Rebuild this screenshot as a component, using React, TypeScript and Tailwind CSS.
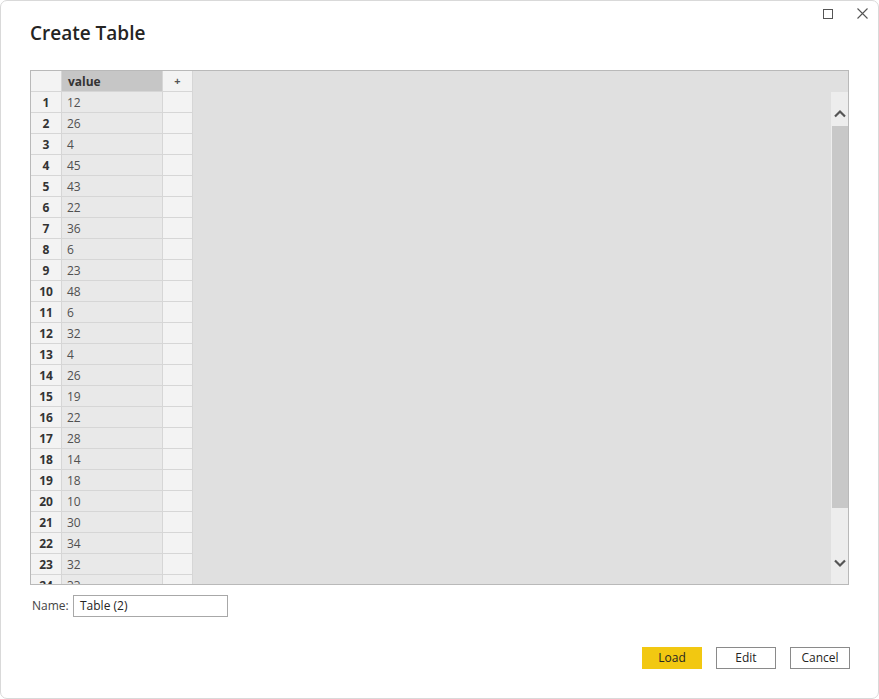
import React from "react";

const values = [12, 26, 4, 45, 43, 22, 36, 6, 23, 48, 6, 32, 4, 26, 19, 22, 28, 14, 18, 10, 30, 34, 32, 33];

const font = { fontFamily: '"Open Sans", "Noto Sans", Arial, sans-serif' };

function Chevron({ down }: { down?: boolean }) {
  return (
    <svg width="12" height="9" viewBox="0 0 12 9" className={down ? "rotate-180" : ""}>
      <path d="M1 7.5 L6 2.5 L11 7.5" fill="none" stroke="#555" strokeWidth="2.2" />
    </svg>
  );
}

export default function App() {
  return (
    <div
      className="relative w-[879px] h-[699px] bg-white border border-[#d9d9d9] rounded-[7px] overflow-hidden flex flex-col text-[#444]"
      style={font}
    >
      {/* window buttons */}
      <div className="absolute top-[7px] right-[10px] flex items-center gap-[24px]">
        <div className="w-[10px] h-[10px] border border-[#555]" />
        <svg width="11" height="11" viewBox="0 0 11 11">
          <path d="M0.5 0.5 L10.5 10.5 M10.5 0.5 L0.5 10.5" stroke="#555" strokeWidth="1.1" />
        </svg>
      </div>

      <div className="h-[69px] pl-[29px] pt-[19px]">
        <h1 className="text-[19px] font-semibold text-[#252423] leading-[26px]">Create Table</h1>
      </div>

      {/* grid */}
      <div className="mx-[29px] h-[515px] border border-[#b9b9b9] flex overflow-hidden">
        <div className="w-[162px] flex flex-col overflow-hidden text-[12px]">
          <div className="flex h-[21px] shrink-0 border-b border-[#d6d6d6]">
            <div className="w-[31px] border-r border-[#d6d6d6] bg-[#f3f3f3]" />
            <div className="w-[101px] border-r border-[#d6d6d6] bg-[#c6c6c6] pl-[6px] pt-[1px] flex items-center font-bold text-[#333]">
              value
            </div>
            <div className="w-[30px] border-r border-[#d6d6d6] bg-[#f3f3f3] pt-[1px] flex items-center justify-center font-bold text-[#555] text-[11px]">
              +
            </div>
          </div>
          {values.map((v, i) => (
            <div key={i} className="flex h-[21px] shrink-0 border-b border-[#d6d6d6]">
              <div className="w-[31px] border-r border-[#d6d6d6] bg-[#f3f3f3] flex items-center justify-center pt-[1px] font-bold text-[#333]">
                {i + 1}
              </div>
              <div className="w-[101px] border-r border-[#d6d6d6] bg-[#e9e9e9] pl-[5px] pt-[1px] flex items-center text-[#505050]">
                {v}
              </div>
              <div className="w-[30px] border-r border-[#d6d6d6] bg-[#f3f3f3]" />
            </div>
          ))}
        </div>

        <div className="flex-1 bg-[#e0e0e0] flex flex-col items-end">
          <div className="h-[21px] shrink-0" />
          <div className="flex-1 w-[17px] bg-[#ededed] flex flex-col">
            <div className="h-[34px] flex items-center justify-center pt-[8px]">
              <Chevron />
            </div>
            <div className="h-[382px] ml-[1px] bg-[#c8c8c8]" />
            <div className="flex-1 flex items-end justify-center pb-[16px]">
              <Chevron down />
            </div>
          </div>
        </div>
      </div>

      {/* name */}
      <div className="flex items-center mt-[10px] pl-[31px] text-[12px]">
        <span className="w-[41px] shrink-0 text-[#444]">Name:</span>
        <div className="w-[155px] h-[22px] border border-[#a8a8a8] flex items-center pl-[6px] text-[#252423]">
          Table (2)
        </div>
      </div>

      {/* actions */}
      <div className="flex justify-end gap-[14px] mt-[30px] pr-[28px] text-[12px]">
        <button className="w-[60px] h-[22px] bg-[#f2c811] text-[#252423]">Load</button>
        <button className="w-[60px] h-[22px] border border-[#8a8a8a] text-[#252423]">Edit</button>
        <button className="w-[60px] h-[22px] border border-[#8a8a8a] text-[#252423]">Cancel</button>
      </div>
    </div>
  );
}
